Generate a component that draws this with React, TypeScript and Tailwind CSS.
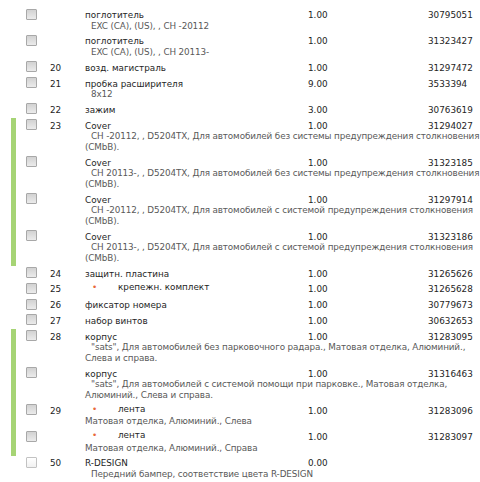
import React from "react";

interface Part {
  no?: string;
  name: string;
  qty: string;
  part: string;
  desc?: string;
  indent?: boolean;
  bullet?: boolean;
  group?: boolean;
  active?: boolean;
}

const rows: Part[] = [
  { name: "поглотитель", qty: "1.00", part: "30795051", desc: "EXC (CA), (US), , CH -20112", indent: true },
  { name: "поглотитель", qty: "1.00", part: "31323427", desc: "EXC (CA), (US), , CH 20113-", indent: true },
  { no: "20", name: "возд. магистраль", qty: "1.00", part: "31297472" },
  { no: "21", name: "пробка расширителя", qty: "9.00", part: "3533394", desc: "8x12", indent: true },
  { no: "22", name: "зажим", qty: "3.00", part: "30763619" },
  {
    no: "23",
    name: "Cover",
    qty: "1.00",
    part: "31294027",
    desc: "CH -20112, , D5204TX, Для автомобилей без системы предупреждения столкновения (CMbB).",
    indent: true,
    group: true,
  },
  {
    name: "Cover",
    qty: "1.00",
    part: "31323185",
    desc: "CH 20113-, , D5204TX, Для автомобилей без системы предупреждения столкновения (CMbB).",
    indent: true,
    group: true,
  },
  {
    name: "Cover",
    qty: "1.00",
    part: "31297914",
    desc: "CH -20112, , D5204TX, Для автомобилей с системой предупреждения столкновения (CMbB).",
    indent: true,
    group: true,
  },
  {
    name: "Cover",
    qty: "1.00",
    part: "31323186",
    desc: "CH 20113-, , D5204TX, Для автомобилей с системой предупреждения столкновения (CMbB).",
    indent: true,
    group: true,
  },
  { no: "24", name: "защитн. пластина", qty: "1.00", part: "31265626" },
  { no: "25", name: "крепежн. комплект", qty: "1.00", part: "31265628", bullet: true },
  { no: "26", name: "фиксатор номера", qty: "1.00", part: "30779673" },
  { no: "27", name: "набор винтов", qty: "1.00", part: "30632653" },
  {
    no: "28",
    name: "корпус",
    qty: "1.00",
    part: "31283095",
    desc: "\"sats\", Для автомобилей без парковочного радара., Матовая отделка, Алюминий., Слева и справа.",
    indent: true,
    group: true,
  },
  {
    name: "корпус",
    qty: "1.00",
    part: "31316463",
    desc: "\"sats\", Для автомобилей с системой помощи при парковке., Матовая отделка, Алюминий., Слева и справа.",
    indent: true,
    group: true,
  },
  { no: "29", name: "лента", qty: "1.00", part: "31283096", desc: "Матовая отделка, Алюминий., Слева", bullet: true, group: true },
  { name: "лента", qty: "1.00", part: "31283097", desc: "Матовая отделка, Алюминий., Справа", bullet: true, group: true },
  { no: "50", name: "R-DESIGN", qty: "0.00", part: "", desc: "Передний бампер, соответствие цвета R-DESIGN", indent: true, active: true },
];

function Checkbox({ active }: { active?: boolean }) {
  return (
    <div
      className={`w-[11px] h-[11px] border rounded-[1px] ${
        active
          ? "border-[#c2c2c2] bg-gradient-to-b from-[#ffffff] to-[#f1f1f1]"
          : "border-[#a8a8a8] bg-gradient-to-b from-[#d2d2d2] to-[#ebebeb]"
      }`}
    />
  );
}

function Row({ row }: { row: Part }) {
  return (
    <div className="flex items-stretch">
      <div className="w-[11px] shrink-0" />
      <div className={`w-[5px] shrink-0 ${row.group ? "bg-[#a6d475]" : ""}`} />
      <div className="w-[34px] shrink-0 pl-[10px] pt-[1px]">
        <Checkbox active={row.active} />
      </div>
      <div className="w-[35px] shrink-0 pt-[2.6px] pb-[2.6px] text-[#1e1e1e]">{row.no ?? ""}</div>
      <div className="flex-1 min-w-0 pt-[2.6px] pb-[2.6px]">
        <div className="flex">
          <div className="w-[223px] shrink-0 text-[#1e1e1e]">
            {row.bullet ? (
              <div className="relative -top-[2px] flex">
                <div className="w-[33px] shrink-0 pl-[7px] text-[#e8693a]">•</div>
                <div>{row.name}</div>
              </div>
            ) : (
              row.name
            )}
          </div>
          <div className="w-[120px] shrink-0 text-[#1e1e1e]">{row.qty}</div>
          <div className="text-[#1e1e1e]">{row.part}</div>
        </div>
        {row.desc && (
          <div className={`text-[#595959] tracking-[-0.12px] ${row.indent ? "indent-[6px]" : ""}`}>
            {row.desc}
          </div>
        )}
      </div>
    </div>
  );
}

export default function App() {
  return (
    <div
      className="w-[480px] h-[482px] overflow-hidden bg-white pt-[7.5px] text-[8.8px] leading-[10.6px]"
      style={{ fontFamily: '"DejaVu Sans", Verdana, sans-serif' }}
    >
      {rows.map((row, i) => (
        <Row key={i} row={row} />
      ))}
    </div>
  );
}
